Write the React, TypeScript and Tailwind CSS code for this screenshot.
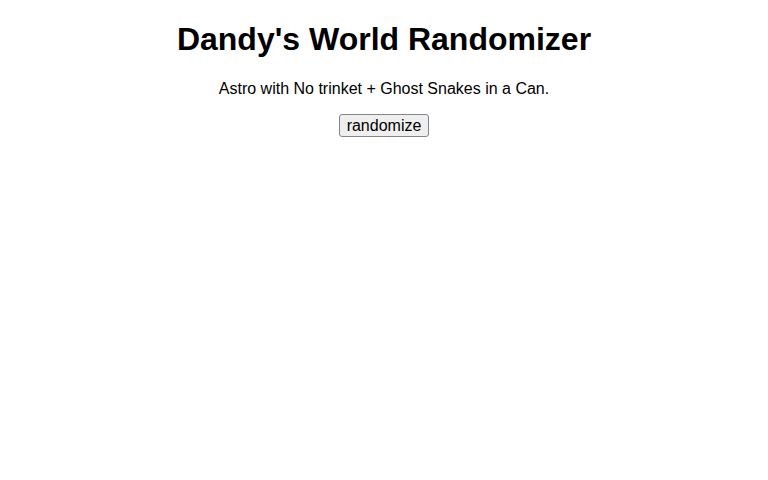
export default function App() {
  return (
    <div className="min-h-[480px] bg-white text-center text-black font-['Liberation_Sans',Arial,sans-serif] text-base">
      <h1 className="text-[32px] font-bold leading-[normal] pt-[21.44px] mb-[21.44px]">
        Dandy's World Randomizer
      </h1>
      <p className="leading-[normal] mb-4">Astro with No trinket + Ghost Snakes in a Can.</p>
      <button className="bg-[#efefef] border border-[#858585] rounded-[3px] px-[7px] py-[1.5px] text-base leading-[normal] text-black hover:bg-[#e5e5e5]">
        randomize
      </button>
    </div>
  );
}
